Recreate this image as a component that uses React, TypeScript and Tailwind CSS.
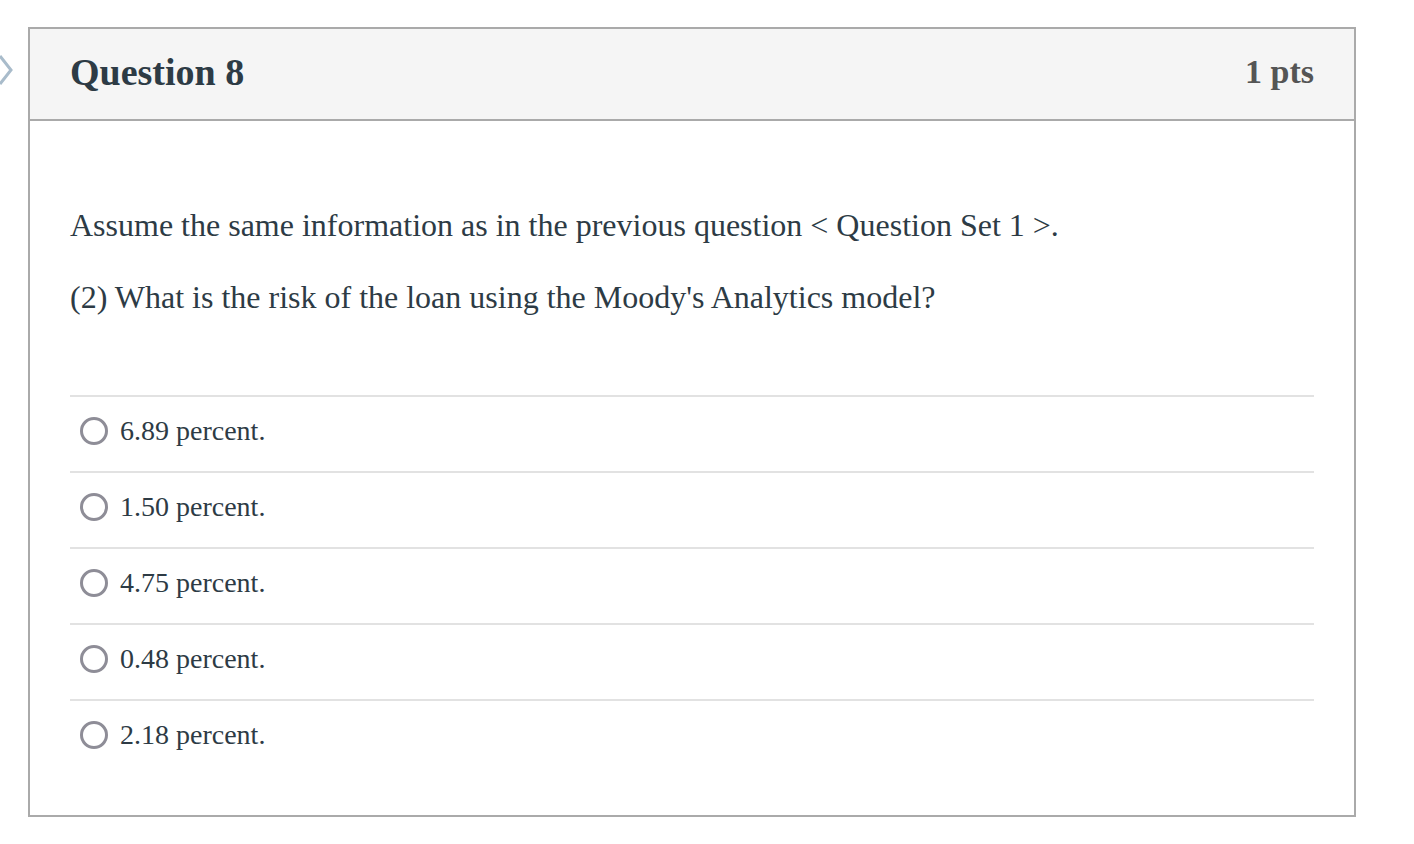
import React from "react";

const options = ["6.89 percent.", "1.50 percent.", "4.75 percent.", "0.48 percent.", "2.18 percent."];

const serif = { fontFamily: '"Liberation Serif", "Times New Roman", serif' };

const Radio = () => (
  <span className="flex h-[28px] w-[28px] shrink-0 items-center justify-center rounded-full border-[3.5px] border-[#8e8d97] bg-white" />
);

export default function App() {
  return (
    <div className="relative min-h-[844px] bg-white" style={serif}>
      {/* side chevron */}
      <svg className="absolute left-0 top-[54px]" width="14" height="32" viewBox="0 0 14 32">
        <path d="M0 2 L11 16 L0 30" fill="none" stroke="#a9bccb" strokeWidth="3" />
      </svg>

      <div className="pl-[28px] pt-[27px]">
        <div className="w-[1328px] border-2 border-[#aaaaaa]">
          <div className="flex h-[92px] items-center justify-between border-b-2 border-[#aaaaaa] bg-[#f5f5f5] pb-[5px] pl-[40px] pr-[40px]">
            <h2 className="text-[38px] font-bold leading-none text-[#2d3b45]">Question 8</h2>
            <span className="text-[34px] font-bold leading-none text-[#555555]">1 pts</span>
          </div>

          <div className="px-[40px] pb-[40px] pt-[84px] text-[#2d3b45]">
            <p className="text-[32px] leading-[40px]">
              Assume the same information as in the previous question &lt; Question Set 1 &gt;.
            </p>
            <p className="mt-[32px] text-[32px] leading-[40px]">
              (2) What is the risk of the loan using the Moody's Analytics model?
            </p>

            <div className="mt-[78px]">
              {options.map((o) => (
                <div key={o} className="flex h-[76px] items-center gap-[12px] border-t-2 border-[#e2e2e2] pb-[6px] pl-[10px]">
                  <Radio />
                  <span className="text-[28px] leading-none">{o}</span>
                </div>
              ))}
            </div>
          </div>
        </div>
      </div>
    </div>
  );
}
